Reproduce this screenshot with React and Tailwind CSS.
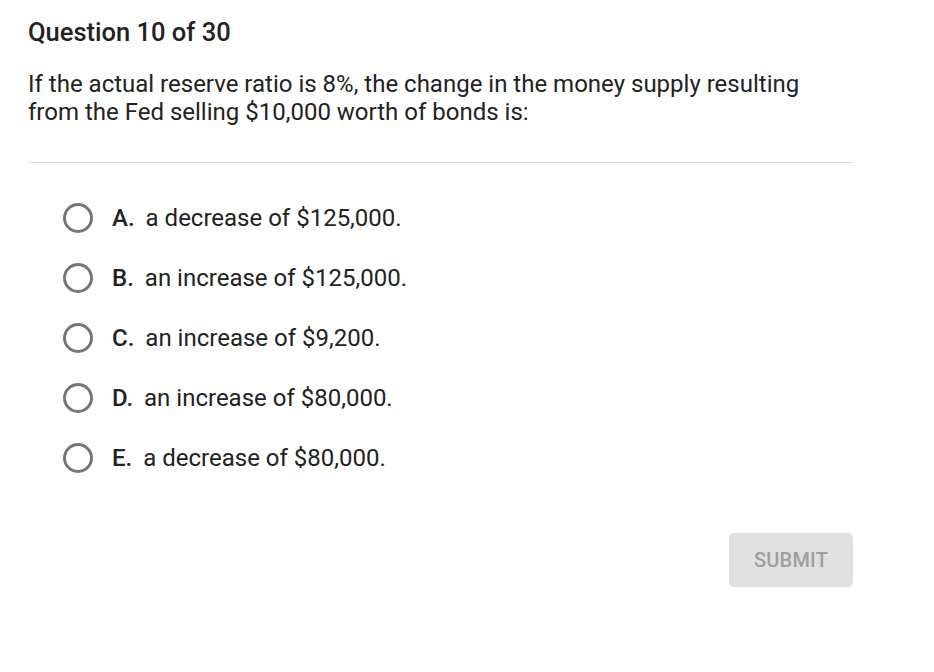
import React from 'react';

const options = [
  { letter: 'A.', text: 'a decrease of $125,000.' },
  { letter: 'B.', text: 'an increase of $125,000.' },
  { letter: 'C.', text: 'an increase of $9,200.' },
  { letter: 'D.', text: 'an increase of $80,000.' },
  { letter: 'E.', text: 'a decrease of $80,000.' },
];

export default function App() {
  return (
    <div className="min-h-screen bg-white text-[#212121]" style={{ fontFamily: 'Roboto, "Liberation Sans", sans-serif' }}>
      <div className="w-[825px] ml-[28px] pt-[16px]">
        <h1 className="text-[25.5px] font-medium leading-[32px] text-[#222]">Question 10 of 30</h1>

        <p className="mt-[22px] text-[24px] leading-[28px] text-[#222]">
          If the actual reserve ratio is 8%, the change in the money supply resulting from the Fed selling $10,000 worth of bonds is:
        </p>

        <div className="mt-[36px] border-t border-[#e0e0e0]" />

        <div className="mt-[40px] ml-[35px] flex flex-col gap-[30px]">
          {options.map((o) => (
            <label key={o.letter} className="flex items-center h-[30px] cursor-pointer">
              <span className="w-[30px] h-[30px] rounded-full border-[3px] border-[#757575] shrink-0" />
              <span className="ml-[19px] text-[24px] font-medium text-[#222]">{o.letter}</span>
              <span className="ml-[11px] text-[24px] text-[#222]">{o.text}</span>
            </label>
          ))}
        </div>

        <div className="mt-[60px] flex justify-end">
          <button className="w-[124px] h-[54px] rounded-[5px] bg-[#e0e0e0] text-[#9e9e9e] text-[20px] font-medium tracking-[0.2px]">
            SUBMIT
          </button>
        </div>
      </div>
    </div>
  );
}
